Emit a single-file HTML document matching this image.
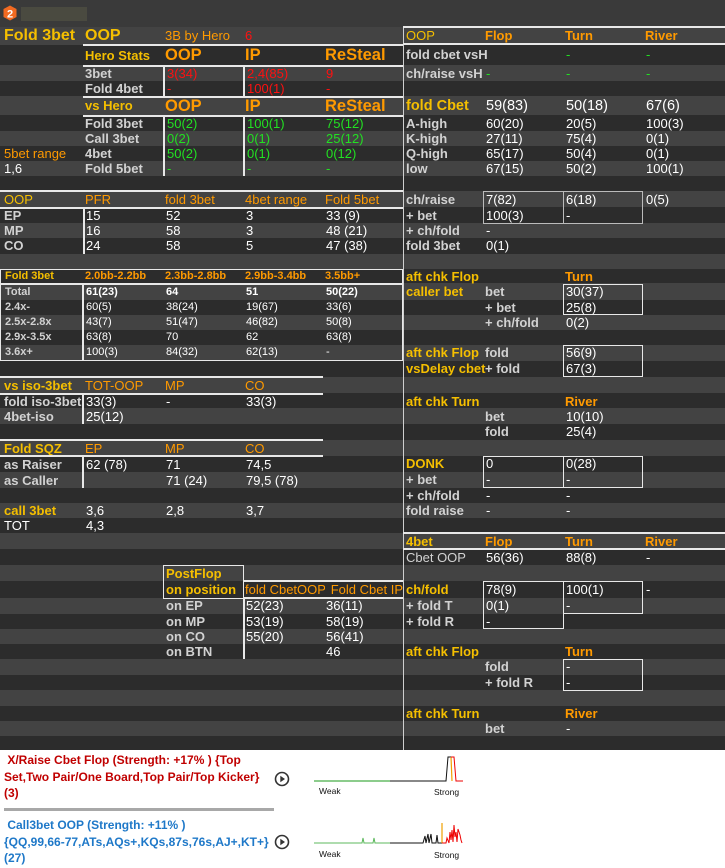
<!DOCTYPE html>
<html><head><meta charset="utf-8">
<style>
*{margin:0;padding:0;box-sizing:border-box}
body{width:725px;height:868px;position:relative;overflow:hidden;background:#2c2c2c;font-family:"Liberation Sans",Arial,sans-serif;font-size:13px}
.s{position:absolute;left:0;width:725px}
.L{background:#434343}.D{background:#2c2c2c}
.t{position:absolute;white-space:nowrap;font-weight:bold}
.n{font-weight:normal}
.y{color:#f5bf00}.o{color:#ff9a00}.g{color:#d2d2d2}.w{color:#fff}.gr{color:#22e022}.rd{color:#ff1010}
.h{position:absolute;height:2px;background:#e8e8e8}
.v{position:absolute;width:2px;background:#e8e8e8}
.bx{position:absolute;border:1.5px solid #e8e8e8}
.big{font-size:16px}
.m{font-size:13px}
.sm{font-size:11px}
</style></head><body>
<div class="s" style="top:0;height:27px;background:#3a3a3a"></div>
<div class="s L" style="top:27px;height:18px"></div>
<div class="s D" style="top:45px;height:20px"></div>
<div class="s L" style="top:65px;height:16px"></div>
<div class="s D" style="top:81px;height:15px"></div>
<div class="s L" style="top:96px;height:19px"></div>
<div class="s D" style="top:115px;height:16px"></div>
<div class="s L" style="top:131px;height:15px"></div>
<div class="s D" style="top:146px;height:15px"></div>
<div class="s L" style="top:161px;height:15px"></div>
<div class="s D" style="top:176px;height:15px"></div>
<div class="s L" style="top:191px;height:16px"></div>
<div class="s D" style="top:207px;height:16px"></div>
<div class="s L" style="top:223px;height:15px"></div>
<div class="s D" style="top:238px;height:16px"></div>
<div class="s L" style="top:254px;height:15px"></div>
<div class="s D" style="top:269px;height:14px"></div>
<div class="s L" style="top:283px;height:17px"></div>
<div class="s D" style="top:300px;height:15px"></div>
<div class="s L" style="top:315px;height:15px"></div>
<div class="s D" style="top:330px;height:15px"></div>
<div class="s L" style="top:345px;height:16px"></div>
<div class="s D" style="top:361px;height:16px"></div>
<div class="s L" style="top:377px;height:16px"></div>
<div class="s D" style="top:393px;height:15px"></div>
<div class="s L" style="top:408px;height:16px"></div>
<div class="s D" style="top:424px;height:16px"></div>
<div class="s L" style="top:440px;height:16px"></div>
<div class="s D" style="top:456px;height:16px"></div>
<div class="s L" style="top:472px;height:16px"></div>
<div class="s D" style="top:488px;height:15px"></div>
<div class="s L" style="top:503px;height:15px"></div>
<div class="s D" style="top:518px;height:15px"></div>
<div class="s L" style="top:533px;height:16px"></div>
<div class="s D" style="top:549px;height:16px"></div>
<div class="s L" style="top:565px;height:16px"></div>
<div class="s D" style="top:581px;height:17px"></div>
<div class="s L" style="top:598px;height:16px"></div>
<div class="s D" style="top:614px;height:15px"></div>
<div class="s L" style="top:629px;height:15px"></div>
<div class="s D" style="top:644px;height:15px"></div>
<div class="s L" style="top:659px;height:16px"></div>
<div class="s D" style="top:675px;height:15px"></div>
<div class="s L" style="top:690px;height:16px"></div>
<div class="s D" style="top:706px;height:15px"></div>
<div class="s L" style="top:721px;height:15px"></div>
<div class="s D" style="top:736px;height:14px"></div>
<div class="s" style="top:750px;height:118px;background:#fff"></div>

<svg style="position:absolute;left:2px;top:5px" width="16" height="16" viewBox="0 0 16 16"><polygon points="8,0.5 14.5,4 14.5,12 8,15.5 1.5,12 1.5,4" fill="#f26a21"/><text x="8" y="12.5" font-family="Liberation Sans" font-weight="bold" font-size="11" fill="#fff" text-anchor="middle">2</text></svg>
<div style="position:absolute;left:21px;top:7px;width:66px;height:14px;background:#4a4a40"></div>

<div class="t y big" style="left:4px;top:27px;line-height:18px">Fold 3bet</div>
<div class="t y big" style="left:85px;top:27px;line-height:18px">OOP</div>
<div class="t o n m" style="left:165px;top:27px;line-height:18px">3B by Hero</div>
<div class="t rd n m" style="left:245px;top:27px;line-height:18px">6</div>
<div class="h" style="left:83px;top:44px;width:320px"></div>
<div class="t y m" style="left:85px;top:46px;line-height:19px">Hero Stats</div>
<div class="t o" style="left:165px;top:46px;line-height:19px;font-size:16.5px">OOP</div>
<div class="t o" style="left:245px;top:46px;line-height:19px;font-size:16.5px">IP</div>
<div class="t o" style="left:325px;top:46px;line-height:19px;font-size:16.5px">ReSteal</div>
<div class="h" style="left:83px;top:65px;width:320px"></div>
<div class="t g m" style="left:85px;top:66px;line-height:15px">3bet</div>
<div class="t rd n m" style="left:167px;top:66px;line-height:15px">3(34)</div>
<div class="t rd n m" style="left:247px;top:66px;line-height:15px">2,4(85)</div>
<div class="t rd n m" style="left:326px;top:66px;line-height:15px">9</div>
<div class="t g m" style="left:85px;top:81px;line-height:15px">Fold 4bet</div>
<div class="t rd n m" style="left:167px;top:81px;line-height:15px">-</div>
<div class="t rd n m" style="left:247px;top:81px;line-height:15px">100(1)</div>
<div class="t rd n m" style="left:326px;top:81px;line-height:15px">-</div>
<div class="h" style="left:83px;top:96px;width:320px"></div>
<div class="t y m" style="left:85px;top:97px;line-height:18px">vs Hero</div>
<div class="t o" style="left:165px;top:97px;line-height:18px;font-size:16.5px">OOP</div>
<div class="t o" style="left:245px;top:97px;line-height:18px;font-size:16.5px">IP</div>
<div class="t o" style="left:325px;top:97px;line-height:18px;font-size:16.5px">ReSteal</div>
<div class="h" style="left:83px;top:115px;width:320px"></div>
<div class="v" style="left:163px;top:65px;height:31px"></div>
<div class="v" style="left:243px;top:65px;height:31px"></div>
<div class="v" style="left:163px;top:115px;height:61px"></div>
<div class="v" style="left:243px;top:115px;height:61px"></div>
<div class="t g m" style="left:85px;top:116px;line-height:15px">Fold 3bet</div>
<div class="t gr n m" style="left:167px;top:116px;line-height:15px">50(2)</div>
<div class="t gr n m" style="left:247px;top:116px;line-height:15px">100(1)</div>
<div class="t gr n m" style="left:326px;top:116px;line-height:15px">75(12)</div>
<div class="t g m" style="left:85px;top:131px;line-height:15px">Call 3bet</div>
<div class="t gr n m" style="left:167px;top:131px;line-height:15px">0(2)</div>
<div class="t gr n m" style="left:247px;top:131px;line-height:15px">0(1)</div>
<div class="t gr n m" style="left:326px;top:131px;line-height:15px">25(12)</div>
<div class="t o n m" style="left:4px;top:146px;line-height:15px">5bet range</div>
<div class="t g m" style="left:85px;top:146px;line-height:15px">4bet</div>
<div class="t gr n m" style="left:167px;top:146px;line-height:15px">50(2)</div>
<div class="t gr n m" style="left:247px;top:146px;line-height:15px">0(1)</div>
<div class="t gr n m" style="left:326px;top:146px;line-height:15px">0(12)</div>
<div class="t w n m" style="left:4px;top:161px;line-height:15px">1,6</div>
<div class="t g m" style="left:85px;top:161px;line-height:15px">Fold 5bet</div>
<div class="t gr n m" style="left:167px;top:161px;line-height:15px">-</div>
<div class="t gr n m" style="left:247px;top:161px;line-height:15px">-</div>
<div class="t gr n m" style="left:326px;top:161px;line-height:15px">-</div>

<div class="h" style="left:0;top:190px;width:403px"></div>
<div class="t y n m" style="left:4px;top:192px;line-height:15px">OOP</div>
<div class="t o n m" style="left:85px;top:192px;line-height:15px">PFR</div>
<div class="t o n m" style="left:165px;top:192px;line-height:15px">fold 3bet</div>
<div class="t o n m" style="left:245px;top:192px;line-height:15px">4bet range</div>
<div class="t o n m" style="left:325px;top:192px;line-height:15px">Fold 5bet</div>
<div class="h" style="left:0;top:207px;width:403px"></div>
<div class="v" style="left:83px;top:208px;height:46px"></div>
<div class="t g m" style="left:4px;top:208px;line-height:15px">EP</div>
<div class="t w n m" style="left:86px;top:208px;line-height:15px">15</div>
<div class="t w n m" style="left:166px;top:208px;line-height:15px">52</div>
<div class="t w n m" style="left:246px;top:208px;line-height:15px">3</div>
<div class="t w n m" style="left:326px;top:208px;line-height:15px">33 (9)</div>
<div class="t g m" style="left:4px;top:223px;line-height:15px">MP</div>
<div class="t w n m" style="left:86px;top:223px;line-height:15px">16</div>
<div class="t w n m" style="left:166px;top:223px;line-height:15px">58</div>
<div class="t w n m" style="left:246px;top:223px;line-height:15px">3</div>
<div class="t w n m" style="left:326px;top:223px;line-height:15px">48 (21)</div>
<div class="t g m" style="left:4px;top:238px;line-height:15px">CO</div>
<div class="t w n m" style="left:86px;top:238px;line-height:15px">24</div>
<div class="t w n m" style="left:166px;top:238px;line-height:15px">58</div>
<div class="t w n m" style="left:246px;top:238px;line-height:15px">5</div>
<div class="t w n m" style="left:326px;top:238px;line-height:15px">47 (38)</div>

<div class="bx" style="left:0;top:269px;width:403px;height:92px"></div>
<div class="h" style="left:0;top:283px;width:403px"></div>
<div class="v" style="left:82px;top:284px;height:77px"></div>
<div class="t y sm" style="left:5px;top:269px;line-height:15px">Fold 3bet</div>
<div class="t o sm" style="left:85px;top:269px;line-height:15px">2.0bb-2.2bb</div>
<div class="t o sm" style="left:165px;top:269px;line-height:15px">2.3bb-2.8bb</div>
<div class="t o sm" style="left:245px;top:269px;line-height:15px">2.9bb-3.4bb</div>
<div class="t o sm" style="left:325px;top:269px;line-height:15px">3.5bb+</div>
<div class="t g sm" style="left:5px;top:284px;line-height:16px">Total</div>
<div class="t w sm" style="left:86px;top:284px;line-height:16px">61(23)</div>
<div class="t w sm" style="left:166px;top:284px;line-height:16px">64</div>
<div class="t w sm" style="left:246px;top:284px;line-height:16px">51</div>
<div class="t w sm" style="left:326px;top:284px;line-height:16px">50(22)</div>
<div class="t g sm" style="left:5px;top:300px;line-height:15px">2.4x-</div>
<div class="t w sm n" style="left:86px;top:300px;line-height:15px">60(5)</div>
<div class="t w sm n" style="left:166px;top:300px;line-height:15px">38(24)</div>
<div class="t w sm n" style="left:246px;top:300px;line-height:15px">19(67)</div>
<div class="t w sm n" style="left:326px;top:300px;line-height:15px">33(6)</div>
<div class="t g sm" style="left:5px;top:315px;line-height:15px">2.5x-2.8x</div>
<div class="t w sm n" style="left:86px;top:315px;line-height:15px">43(7)</div>
<div class="t w sm n" style="left:166px;top:315px;line-height:15px">51(47)</div>
<div class="t w sm n" style="left:246px;top:315px;line-height:15px">46(82)</div>
<div class="t w sm n" style="left:326px;top:315px;line-height:15px">50(8)</div>
<div class="t g sm" style="left:5px;top:330px;line-height:15px">2.9x-3.5x</div>
<div class="t w sm n" style="left:86px;top:330px;line-height:15px">63(8)</div>
<div class="t w sm n" style="left:166px;top:330px;line-height:15px">70</div>
<div class="t w sm n" style="left:246px;top:330px;line-height:15px">62</div>
<div class="t w sm n" style="left:326px;top:330px;line-height:15px">63(8)</div>
<div class="t g sm" style="left:5px;top:345px;line-height:15px">3.6x+</div>
<div class="t w sm n" style="left:86px;top:345px;line-height:15px">100(3)</div>
<div class="t w sm n" style="left:166px;top:345px;line-height:15px">84(32)</div>
<div class="t w sm n" style="left:246px;top:345px;line-height:15px">62(13)</div>
<div class="t w sm n" style="left:326px;top:345px;line-height:15px">-</div>

<div class="h" style="left:0;top:376px;width:323px"></div>
<div class="t y m" style="left:4px;top:378px;line-height:16px">vs iso-3bet</div>
<div class="t o n m" style="left:85px;top:378px;line-height:16px">TOT-OOP</div>
<div class="t o n m" style="left:165px;top:378px;line-height:16px">MP</div>
<div class="t o n m" style="left:245px;top:378px;line-height:16px">CO</div>
<div class="h" style="left:0;top:393px;width:323px"></div>
<div class="v" style="left:82px;top:394px;height:30px"></div>
<div class="t g m" style="left:4px;top:394px;line-height:15px">fold iso-3bet</div>
<div class="t w n m" style="left:86px;top:394px;line-height:15px">33(3)</div>
<div class="t w n m" style="left:166px;top:394px;line-height:15px">-</div>
<div class="t w n m" style="left:246px;top:394px;line-height:15px">33(3)</div>
<div class="t g m" style="left:4px;top:409px;line-height:15px">4bet-iso</div>
<div class="t w n m" style="left:86px;top:409px;line-height:15px">25(12)</div>

<div class="h" style="left:0;top:439px;width:323px"></div>
<div class="t y m" style="left:4px;top:441px;line-height:16px">Fold SQZ</div>
<div class="t o n m" style="left:85px;top:441px;line-height:16px">EP</div>
<div class="t o n m" style="left:165px;top:441px;line-height:16px">MP</div>
<div class="t o n m" style="left:245px;top:441px;line-height:16px">CO</div>
<div class="h" style="left:0;top:455px;width:323px"></div>
<div class="v" style="left:82px;top:456px;height:32px"></div>
<div class="t g m" style="left:4px;top:457px;line-height:15px">as Raiser</div>
<div class="t w n m" style="left:86px;top:457px;line-height:15px">62 (78)</div>
<div class="t w n m" style="left:166px;top:457px;line-height:15px">71</div>
<div class="t w n m" style="left:246px;top:457px;line-height:15px">74,5</div>
<div class="t g m" style="left:4px;top:473px;line-height:15px">as Caller</div>
<div class="t w n m" style="left:166px;top:473px;line-height:15px">71 (24)</div>
<div class="t w n m" style="left:246px;top:473px;line-height:15px">79,5 (78)</div>
<div class="t y m" style="left:4px;top:503px;line-height:15px">call 3bet</div>
<div class="t w n m" style="left:86px;top:503px;line-height:15px">3,6</div>
<div class="t w n m" style="left:166px;top:503px;line-height:15px">2,8</div>
<div class="t w n m" style="left:246px;top:503px;line-height:15px">3,7</div>
<div class="t w n m" style="left:4px;top:518px;line-height:15px">TOT</div>
<div class="t w n m" style="left:86px;top:518px;line-height:15px">4,3</div>

<div class="bx" style="left:163px;top:565px;width:81px;height:34px"></div>
<div class="h" style="left:243px;top:580px;width:160px"></div>
<div class="h" style="left:243px;top:597px;width:160px"></div>
<div class="v" style="left:243px;top:598px;height:61px"></div>
<div class="t y m" style="left:166px;top:566px;line-height:15px">PostFlop</div>
<div class="t y m" style="left:166px;top:582px;line-height:15px">on position</div>
<div style="position:absolute;left:245px;top:582px;width:80px;overflow:hidden;line-height:15px;white-space:nowrap" class="o n m">fold CbetOOP</div>
<div style="position:absolute;left:325px;top:582px;width:78px;overflow:hidden;line-height:15px;white-space:nowrap;direction:rtl" class="o n m">Fold Cbet IP</div>
<div class="t g m" style="left:166px;top:598px;line-height:16px">on EP</div>
<div class="t w n m" style="left:246px;top:598px;line-height:16px">52(23)</div>
<div class="t w n m" style="left:326px;top:598px;line-height:16px">36(11)</div>
<div class="t g m" style="left:166px;top:614px;line-height:15px">on MP</div>
<div class="t w n m" style="left:246px;top:614px;line-height:15px">53(19)</div>
<div class="t w n m" style="left:326px;top:614px;line-height:15px">58(19)</div>
<div class="t g m" style="left:166px;top:629px;line-height:15px">on CO</div>
<div class="t w n m" style="left:246px;top:629px;line-height:15px">55(20)</div>
<div class="t w n m" style="left:326px;top:629px;line-height:15px">56(41)</div>
<div class="t g m" style="left:166px;top:644px;line-height:15px">on BTN</div>
<div class="t w n m" style="left:326px;top:644px;line-height:15px">46</div>

<div class="v" style="left:403px;top:27px;height:723px;width:1px;background:#cfcfcf"></div>
<div class="h" style="left:403px;top:26px;width:322px"></div>
<div class="t y n m" style="left:406px;top:28px;line-height:16px">OOP</div>
<div class="t o m" style="left:485px;top:28px;line-height:16px">Flop</div>
<div class="t o m" style="left:565px;top:28px;line-height:16px">Turn</div>
<div class="t o m" style="left:645px;top:28px;line-height:16px">River</div>
<div class="h" style="left:403px;top:43px;width:322px"></div>
<div class="t g m" style="left:406px;top:45px;line-height:20px">fold cbet vsH</div>
<div class="t gr n m" style="left:566px;top:45px;line-height:20px">-</div>
<div class="t gr n m" style="left:646px;top:45px;line-height:20px">-</div>
<div class="t g m" style="left:406px;top:66px;line-height:15px">ch/raise vsH</div>
<div class="t gr n m" style="left:486px;top:66px;line-height:15px">-</div>
<div class="t gr n m" style="left:566px;top:66px;line-height:15px">-</div>
<div class="t gr n m" style="left:646px;top:66px;line-height:15px">-</div>
<div class="t y" style="left:406px;top:96px;line-height:20px;font-size:14.5px">fold Cbet</div>
<div class="t w n" style="left:486px;top:96px;line-height:20px;font-size:14.5px">59(83)</div>
<div class="t w n" style="left:566px;top:96px;line-height:20px;font-size:14.5px">50(18)</div>
<div class="t w n" style="left:646px;top:96px;line-height:20px;font-size:14.5px">67(6)</div>
<div class="t g m" style="left:406px;top:116px;line-height:15px">A-high</div>
<div class="t w n m" style="left:486px;top:116px;line-height:15px">60(20)</div>
<div class="t w n m" style="left:566px;top:116px;line-height:15px">20(5)</div>
<div class="t w n m" style="left:646px;top:116px;line-height:15px">100(3)</div>
<div class="t g m" style="left:406px;top:131px;line-height:15px">K-high</div>
<div class="t w n m" style="left:486px;top:131px;line-height:15px">27(11)</div>
<div class="t w n m" style="left:566px;top:131px;line-height:15px">75(4)</div>
<div class="t w n m" style="left:646px;top:131px;line-height:15px">0(1)</div>
<div class="t g m" style="left:406px;top:146px;line-height:15px">Q-high</div>
<div class="t w n m" style="left:486px;top:146px;line-height:15px">65(17)</div>
<div class="t w n m" style="left:566px;top:146px;line-height:15px">50(4)</div>
<div class="t w n m" style="left:646px;top:146px;line-height:15px">0(1)</div>
<div class="t g m" style="left:406px;top:161px;line-height:15px">low</div>
<div class="t w n m" style="left:486px;top:161px;line-height:15px">67(15)</div>
<div class="t w n m" style="left:566px;top:161px;line-height:15px">50(2)</div>
<div class="t w n m" style="left:646px;top:161px;line-height:15px">100(1)</div>

<div class="bx" style="left:483px;top:191px;width:81px;height:33px;border-color:#bbb"></div>
<div class="bx" style="left:563px;top:191px;width:80px;height:33px;border-color:#bbb"></div>
<div class="t g m" style="left:406px;top:192px;line-height:16px">ch/raise</div>
<div class="t w n m" style="left:486px;top:192px;line-height:16px">7(82)</div>
<div class="t w n m" style="left:566px;top:192px;line-height:16px">6(18)</div>
<div class="t w n m" style="left:646px;top:192px;line-height:16px">0(5)</div>
<div class="t g m" style="left:406px;top:208px;line-height:15px">+ bet</div>
<div class="t w n m" style="left:486px;top:208px;line-height:15px">100(3)</div>
<div class="t w n m" style="left:566px;top:208px;line-height:15px">-</div>
<div class="t g m" style="left:406px;top:223px;line-height:15px">+ ch/fold</div>
<div class="t w n m" style="left:486px;top:223px;line-height:15px">-</div>
<div class="t g m" style="left:406px;top:238px;line-height:16px">fold 3bet</div>
<div class="t w n m" style="left:486px;top:238px;line-height:16px">0(1)</div>

<div class="t y m" style="left:406px;top:269px;line-height:15px">aft chk Flop</div>
<div class="t o m" style="left:565px;top:269px;line-height:15px">Turn</div>
<div class="bx" style="left:563px;top:284px;width:80px;height:31px"></div>
<div class="t y m" style="left:406px;top:284px;line-height:16px">caller bet</div>
<div class="t g m" style="left:485px;top:284px;line-height:16px">bet</div>
<div class="t w n m" style="left:566px;top:284px;line-height:16px">30(37)</div>
<div class="t g m" style="left:485px;top:300px;line-height:16px">+ bet</div>
<div class="t w n m" style="left:566px;top:300px;line-height:16px">25(8)</div>
<div class="t g m" style="left:485px;top:316px;line-height:14px">+ ch/fold</div>
<div class="t w n m" style="left:566px;top:316px;line-height:14px">0(2)</div>

<div class="bx" style="left:563px;top:345px;width:80px;height:32px"></div>
<div class="t y m" style="left:406px;top:345px;line-height:16px">aft chk Flop</div>
<div class="t g m" style="left:485px;top:345px;line-height:16px">fold</div>
<div class="t w n m" style="left:566px;top:345px;line-height:16px">56(9)</div>
<div class="t g m" style="left:485px;top:361px;line-height:16px">+ fold</div>
<div class="t y m" style="left:406px;top:361px;line-height:16px">vsDelay cbet</div>
<div class="t w n m" style="left:566px;top:361px;line-height:16px">67(3)</div>

<div class="t y m" style="left:406px;top:394px;line-height:15px">aft chk Turn</div>
<div class="t o m" style="left:565px;top:394px;line-height:15px">River</div>
<div class="t g m" style="left:485px;top:409px;line-height:15px">bet</div>
<div class="t w n m" style="left:566px;top:409px;line-height:15px">10(10)</div>
<div class="t g m" style="left:485px;top:424px;line-height:15px">fold</div>
<div class="t w n m" style="left:566px;top:424px;line-height:15px">25(4)</div>

<div class="bx" style="left:483px;top:456px;width:81px;height:32px"></div>
<div class="bx" style="left:563px;top:456px;width:80px;height:32px"></div>
<div class="t y m" style="left:406px;top:456px;line-height:16px">DONK</div>
<div class="t w n m" style="left:486px;top:456px;line-height:16px">0</div>
<div class="t w n m" style="left:566px;top:456px;line-height:16px">0(28)</div>
<div class="t g m" style="left:406px;top:472px;line-height:16px">+ bet</div>
<div class="t w n m" style="left:486px;top:472px;line-height:16px">-</div>
<div class="t w n m" style="left:566px;top:472px;line-height:16px">-</div>
<div class="t g m" style="left:406px;top:488px;line-height:15px">+ ch/fold</div>
<div class="t w n m" style="left:486px;top:488px;line-height:15px">-</div>
<div class="t w n m" style="left:566px;top:488px;line-height:15px">-</div>
<div class="t g m" style="left:406px;top:503px;line-height:15px">fold raise</div>
<div class="t w n m" style="left:486px;top:503px;line-height:15px">-</div>
<div class="t w n m" style="left:566px;top:503px;line-height:15px">-</div>

<div class="h" style="left:403px;top:532px;width:322px"></div>
<div class="t y m" style="left:406px;top:534px;line-height:15px">4bet</div>
<div class="t o m" style="left:485px;top:534px;line-height:15px">Flop</div>
<div class="t o m" style="left:565px;top:534px;line-height:15px">Turn</div>
<div class="t o m" style="left:645px;top:534px;line-height:15px">River</div>
<div class="h" style="left:403px;top:548px;width:322px"></div>
<div class="t g n m" style="left:406px;top:550px;line-height:15px">Cbet OOP</div>
<div class="t w n m" style="left:486px;top:550px;line-height:15px">56(36)</div>
<div class="t w n m" style="left:566px;top:550px;line-height:15px">88(8)</div>
<div class="t w n m" style="left:646px;top:550px;line-height:15px">-</div>

<div class="bx" style="left:483px;top:581px;width:81px;height:48px"></div>
<div class="bx" style="left:563px;top:581px;width:80px;height:33px"></div>
<div class="t y m" style="left:406px;top:582px;line-height:16px">ch/fold</div>
<div class="t w n m" style="left:486px;top:582px;line-height:16px">78(9)</div>
<div class="t w n m" style="left:566px;top:582px;line-height:16px">100(1)</div>
<div class="t w n m" style="left:646px;top:582px;line-height:16px">-</div>
<div class="t g m" style="left:406px;top:598px;line-height:16px">+ fold T</div>
<div class="t w n m" style="left:486px;top:598px;line-height:16px">0(1)</div>
<div class="t w n m" style="left:566px;top:598px;line-height:16px">-</div>
<div class="t g m" style="left:406px;top:614px;line-height:15px">+ fold R</div>
<div class="t w n m" style="left:486px;top:614px;line-height:15px">-</div>

<div class="t y m" style="left:406px;top:644px;line-height:15px">aft chk Flop</div>
<div class="t o m" style="left:565px;top:644px;line-height:15px">Turn</div>
<div class="bx" style="left:563px;top:659px;width:80px;height:32px"></div>
<div class="t g m" style="left:485px;top:659px;line-height:16px">fold</div>
<div class="t w n m" style="left:566px;top:659px;line-height:16px">-</div>
<div class="t g m" style="left:485px;top:675px;line-height:15px">+ fold R</div>
<div class="t w n m" style="left:566px;top:675px;line-height:15px">-</div>

<div class="t y m" style="left:406px;top:706px;line-height:15px">aft chk Turn</div>
<div class="t o m" style="left:565px;top:706px;line-height:15px">River</div>
<div class="t g m" style="left:485px;top:721px;line-height:15px">bet</div>
<div class="t w n m" style="left:566px;top:721px;line-height:15px">-</div>

<div style="position:absolute;left:4px;top:752px;white-space:nowrap;font-size:12px;font-weight:bold;line-height:16.5px;color:#c00000">&nbsp;X/Raise Cbet Flop (Strength: +17% ) {Top<br>Set,Two Pair/One Board,Top Pair/Top Kicker}<br>(3)</div>
<div style="position:absolute;left:4px;top:808px;width:270px;height:3px;background:#a8a8a8"></div>
<div style="position:absolute;left:4px;top:817px;white-space:nowrap;font-size:12px;font-weight:bold;line-height:16.5px;color:#1e78c8">&nbsp;Call3bet OOP (Strength: +11% )<br>{QQ,99,66-77,ATs,AQs+,KQs,87s,76s,AJ+,KT+}<br>(27)</div>
<svg style="position:absolute;left:274px;top:771px" width="16" height="16" viewBox="0 0 16 16"><circle cx="8" cy="8" r="6.5" fill="#fff" stroke="#333" stroke-width="1.6"/><polygon points="6.3,4.8 11,8 6.3,11.2" fill="#333"/></svg>
<svg style="position:absolute;left:274px;top:834px" width="16" height="16" viewBox="0 0 16 16"><circle cx="8" cy="8" r="6.5" fill="#fff" stroke="#333" stroke-width="1.6"/><polygon points="6.3,4.8 11,8 6.3,11.2" fill="#333"/></svg>
<svg style="position:absolute;left:310px;top:752px" width="160" height="116" viewBox="0 0 160 116">
<polyline points="4,29 80,29" stroke="#1a9a1a" stroke-width="1" fill="none"/>
<polyline points="80,29 136,29 138,5 141,5" stroke="#111" stroke-width="1" fill="none"/>
<polyline points="141,5 142,29" stroke="#f0a000" stroke-width="1.2" fill="none"/>
<polyline points="141,5 144,5 146,29 153,29" stroke="#e00" stroke-width="1" fill="none"/>
<text x="9" y="42" font-family="Liberation Sans" font-size="8.5" fill="#111">Weak</text>
<text x="124" y="43" font-family="Liberation Sans" font-size="8.5" fill="#111">Strong</text>
<polyline points="4,91 52,91 53,86 54,91 63,91 64,86 65,91 80,91" stroke="#5cb85c" stroke-width="1" fill="none"/>
<polyline points="80,91 113,91 115,84 116,91 118,82 119,91 121,82 122,91 126,91 127,83 128,91 132,91" stroke="#111" stroke-width="1" fill="none"/>
<polyline points="132,91 132,71" stroke="#f0a000" stroke-width="1.2" fill="none"/>
<polyline points="132,91 136,91 137,86 139,91 140,80 141,88 142,78 143,90 144,73 145,85 146,80 147,90 148,77 150,83 151,88 152,91" stroke="#e00" stroke-width="1" fill="none"/>
<text x="9" y="105" font-family="Liberation Sans" font-size="8.5" fill="#111">Weak</text>
<text x="124" y="106" font-family="Liberation Sans" font-size="8.5" fill="#111">Strong</text>
</svg>
</body></html>
